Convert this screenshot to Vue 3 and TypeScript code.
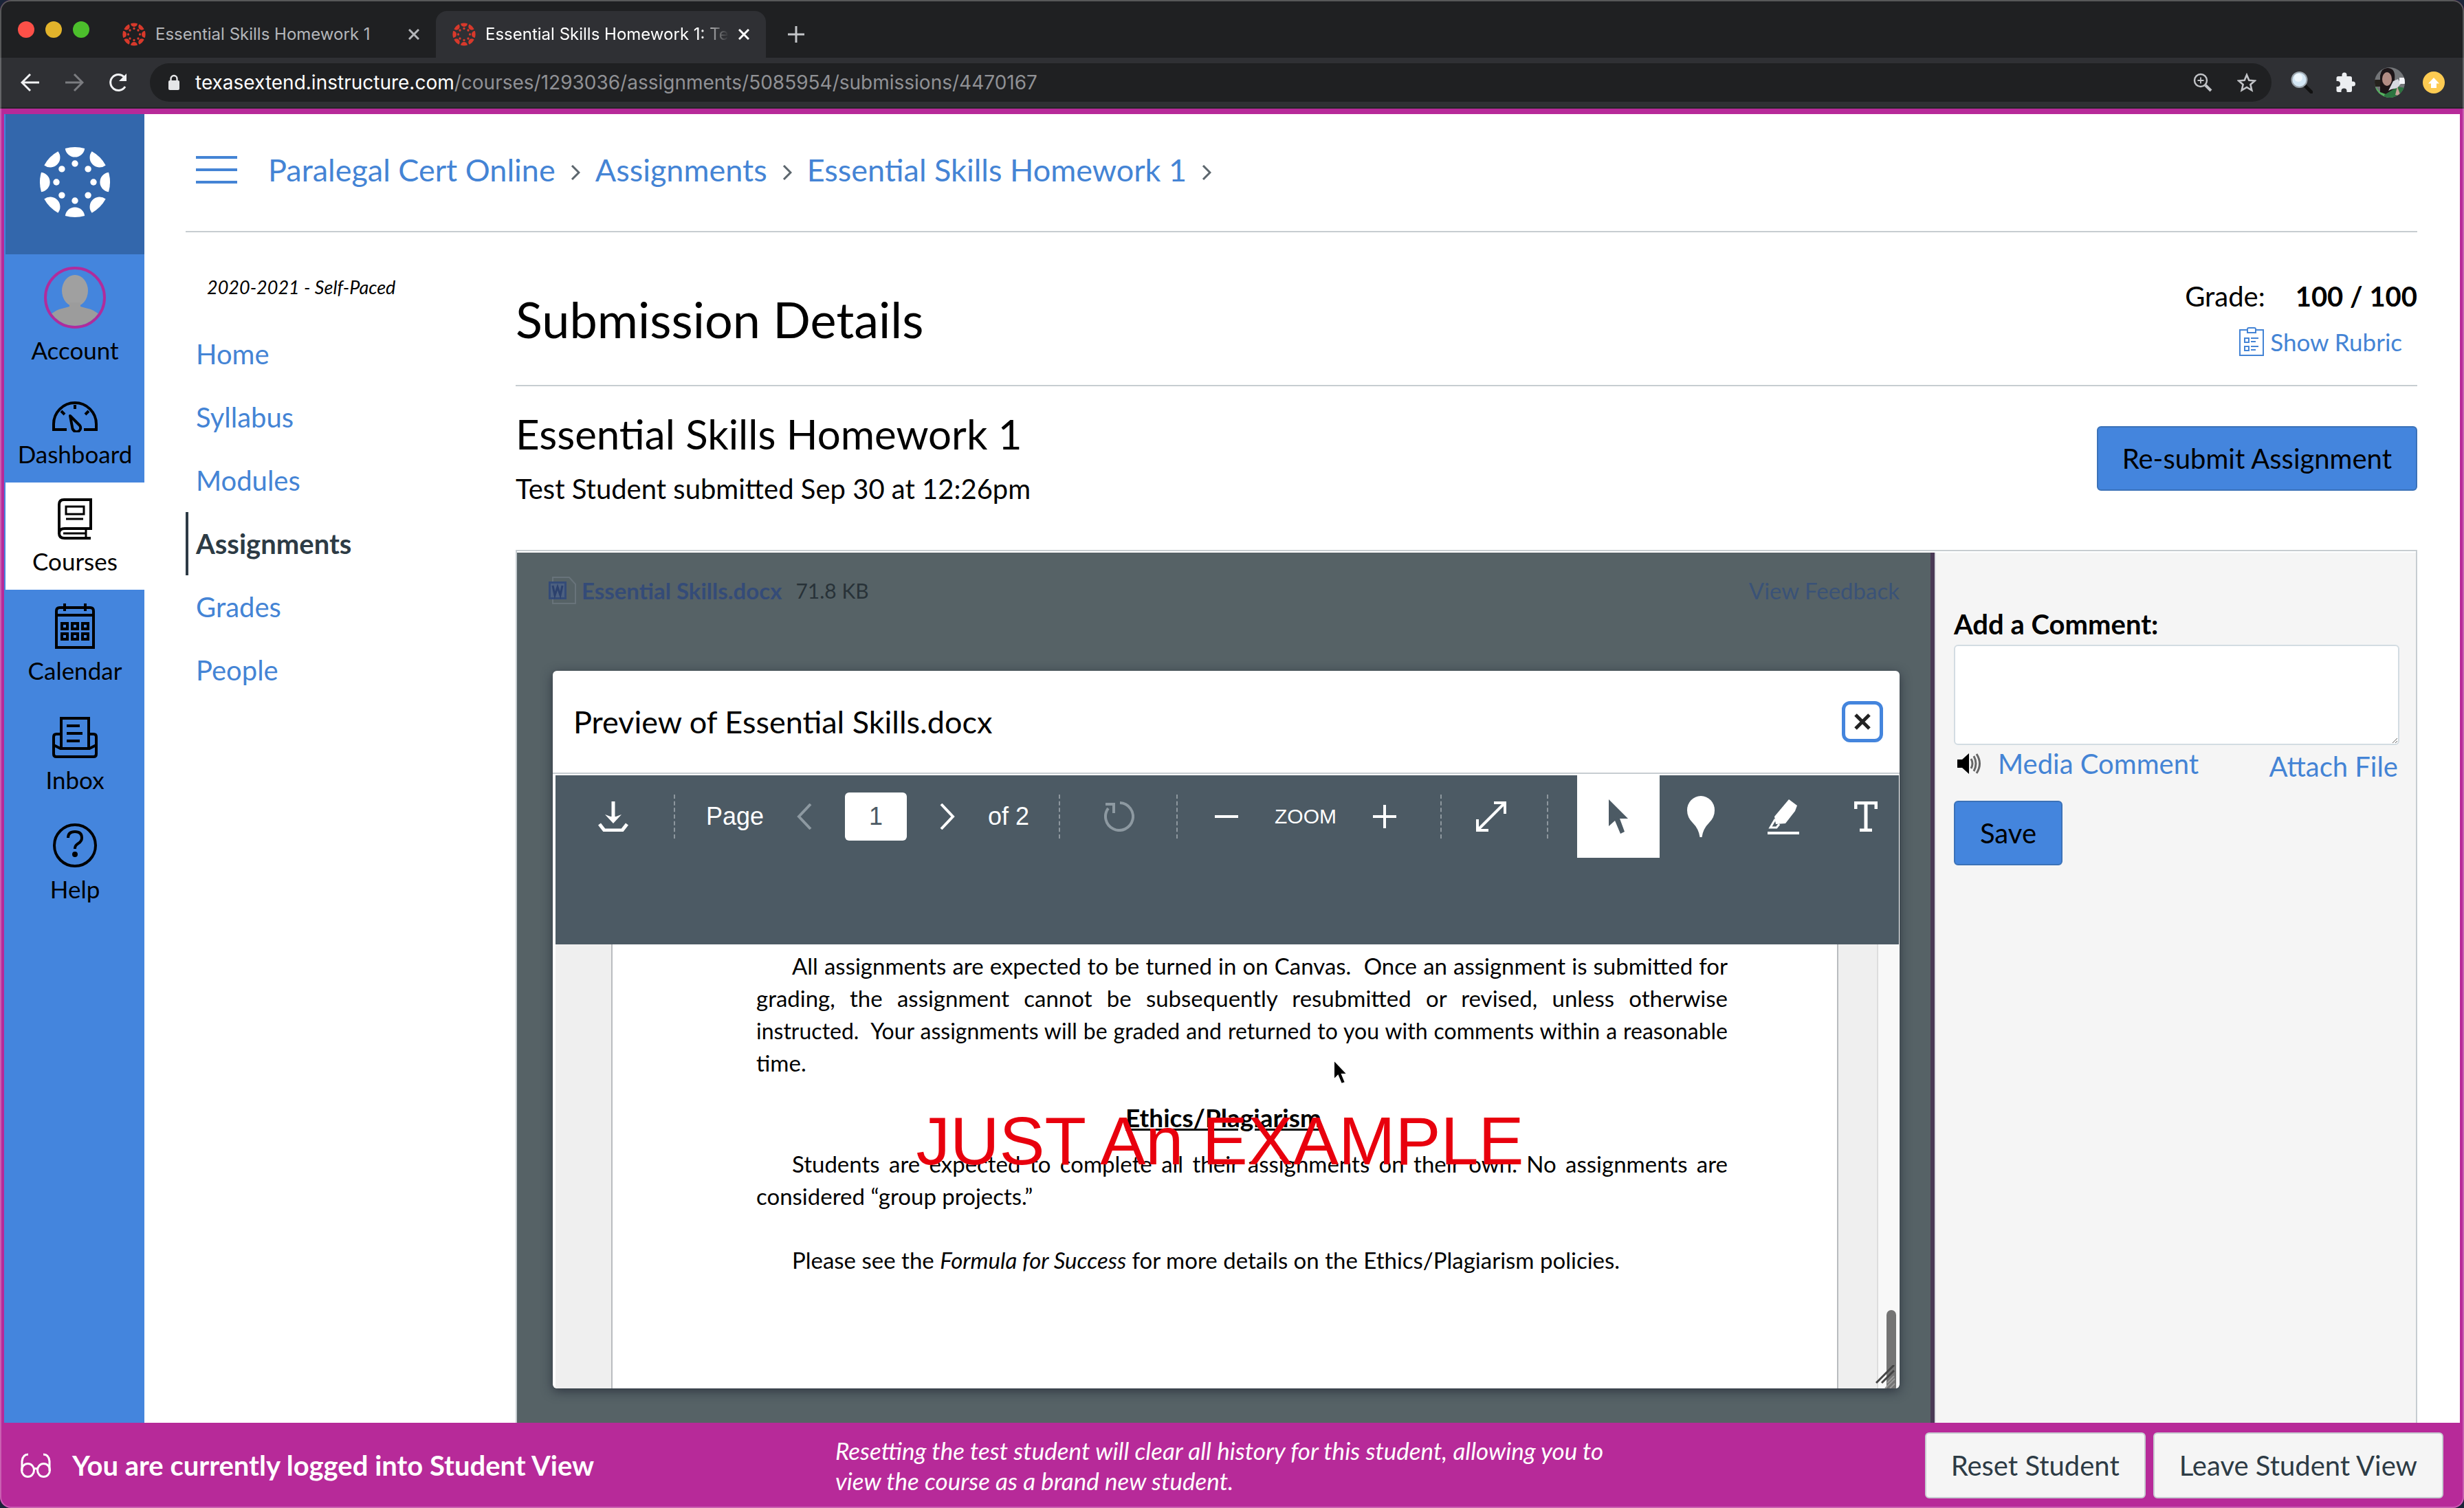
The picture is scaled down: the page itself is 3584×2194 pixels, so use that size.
<script setup lang="ts">
import { ref } from 'vue'

const spokes: number[] = [0, 45, 90, 135, 180, 225, 270, 315]

const crumbs: string[] = ['Paralegal Cert Online', 'Assignments', 'Essential Skills Homework 1']

interface CourseLink {
  label: string
  active?: boolean
}

const courseLinks: CourseLink[] = [
  { label: 'Home' },
  { label: 'Syllabus' },
  { label: 'Modules' },
  { label: 'Assignments', active: true },
  { label: 'Grades' },
  { label: 'People' },
]

const comment = ref('')
const page = ref('1')
</script>

<template>
  <div class="window">
    <header class="chrome">
      <div class="tabstrip">
        <div class="lights"><i class="red"></i><i class="yellow"></i><i class="green"></i></div>
        <div class="tab">
          <svg class="favicon" viewBox="-52 -52 104 104">
            <g v-for="a in spokes" :key="a" :transform="`rotate(${a})`">
              <path d="M-15-48.500A51 51 0 0 1 15-48.500A15 15 0 0 1-15-48.500Z" />
              <circle cy="-26" r="5" />
            </g>
          </svg>
          <span class="tab-title">Essential Skills Homework 1</span>
          <button class="tab-x" aria-label="Close tab">
            <svg viewBox="0 0 16 16"><path d="M1 1L15 15M15 1L1 15" /></svg>
          </button>
        </div>
        <div class="tab active">
          <svg class="favicon" viewBox="-52 -52 104 104">
            <g v-for="a in spokes" :key="a" :transform="`rotate(${a})`">
              <path d="M-15-48.500A51 51 0 0 1 15-48.500A15 15 0 0 1-15-48.500Z" />
              <circle cy="-26" r="5" />
            </g>
          </svg>
          <span class="tab-title">Essential Skills Homework 1: Test Student</span>
          <button class="tab-x" aria-label="Close tab">
            <svg viewBox="0 0 16 16"><path d="M1 1L15 15M15 1L1 15" /></svg>
          </button>
        </div>
        <button class="new-tab" aria-label="New tab">
          <svg viewBox="0 0 24 24"><path d="M12 0V24M0 12H24" /></svg>
        </button>
      </div>
      <div class="toolbar">
        <button class="nav-btn" aria-label="Back">
          <svg viewBox="0 0 28 28"><path d="M27 14H3M14 2L2 14L14 26" /></svg>
        </button>
        <button class="nav-btn dim" aria-label="Forward">
          <svg viewBox="0 0 28 28"><path d="M1 14H25M14 2L26 14L14 26" /></svg>
        </button>
        <button class="nav-btn" aria-label="Reload">
          <svg viewBox="0 0 28 28">
            <path d="M24 20A11.500 11.500 0 1 1 22.500 6" />
            <path d="M26 1V12H15Z" class="solid" />
          </svg>
        </button>
        <div class="address">
          <svg class="lock" viewBox="0 0 18 24">
            <path d="M4.500 10V6.500A4.500 4.500 0 0 1 13.500 6.500V10" fill="none" stroke="#e4e5e7" stroke-width="2.400" />
            <rect x="1" y="9" width="16" height="14" rx="2" fill="#e4e5e7" />
          </svg>
          <p class="url">texasextend.instructure.com<span>/courses/1293036/assignments/5085954/submissions/4470167</span></p>
          <button class="addr-btn" aria-label="Zoom">
            <svg viewBox="0 0 28 28">
              <circle cx="11" cy="11" r="9" />
              <path d="M18 18L26 26" stroke-width="4" />
              <path d="M11 6.500V15.500M6.500 11H15.500" stroke-width="1.800" />
            </svg>
          </button>
          <button class="addr-btn" aria-label="Bookmark">
            <svg viewBox="0 0 28 28">
              <path d="M14 3L17.300 10.800L25.800 11.500L19.400 17L21.300 25.300L14 20.900L6.700 25.300L8.600 17L2.200 11.500L10.700 10.800Z" stroke-width="2.600" />
            </svg>
          </button>
        </div>
        <div class="extensions">
          <svg viewBox="0 0 32 32">
            <path d="M20 20L30 30" stroke="#111" stroke-width="5" stroke-linecap="round" />
            <circle cx="12.500" cy="12" r="11" fill="#d4e7f5" stroke="#9aa3aa" stroke-width="2" />
            <circle cx="11" cy="9" r="6" fill="#eff7fc" />
          </svg>
          <svg viewBox="0 0 32 32">
            <path fill="#eceef1" d="M26.500 14.500H25V9.500A2.500 2.500 0 0 0 22.500 7H17.500V5A3.500 3.500 0 0 0 10.500 5V7H5A2.500 2.500 0 0 0 2.500 9.500V14H4A4 4 0 0 1 4 22H2.500V27.500A2.500 2.500 0 0 0 5 30H9.500V28.500A4 4 0 0 1 17.500 28.500V30H22.500A2.500 2.500 0 0 0 25 27.500V21.500H26.500A3.500 3.500 0 0 0 26.500 14.500Z" />
          </svg>
          <svg class="photo" viewBox="0 0 44 44">
            <defs><clipPath id="photo-clip"><circle cx="22" cy="22" r="22" /></clipPath></defs>
            <g clip-path="url(#photo-clip)">
              <rect width="44" height="44" fill="#737578" />
              <rect x="0" y="18" width="10" height="10" fill="#25221d" />
              <path d="M8 44V12Q10 0 20 1Q31 2 29 18L30 40Z" fill="#1d1518" />
              <ellipse cx="18" cy="17" rx="7" ry="10" fill="#b28c84" />
              <path d="M0 27L8 36L30 44H0Z" fill="#55b25f" />
              <path d="M14 40L34 28L44 30V44H14Z" fill="#2d7440" />
              <path d="M20 34L27 20L34 17L38 24L33 30L24 32Z" fill="#d7d9e0" />
              <path d="M33 28L38 42L30 40Z" fill="#c9a298" />
              <rect x="36" y="15" width="8" height="9" fill="#f6f6fa" />
            </g>
          </svg>
          <svg viewBox="0 0 32 32">
            <circle cx="16" cy="16" r="16" fill="#fdcb52" />
            <path d="M16 9L24 17.500H20V24H12V17.500H8Z" fill="#fff" />
          </svg>
        </div>
      </div>
    </header>

    <div class="page">
      <nav class="global">
        <a href="#" class="logo" aria-label="Canvas">
          <svg viewBox="-52 -52 104 104">
            <g v-for="a in spokes" :key="a" :transform="`rotate(${a})`">
              <path d="M-14.200-49A51 51 0 0 1 14.200-49A14.300 14.300 0 0 1-14.200-49Z" />
              <circle cy="-27" r="4.700" />
            </g>
          </svg>
        </a>
        <a href="#" class="gitem account">
          <span class="avatar">
            <svg viewBox="0 0 82 82">
              <ellipse cx="41" cy="31" rx="19" ry="23" fill="#a0a0a0" />
              <path d="M33 48H49V54Q56 56 64 58Q74 62 80 70V82H2V70Q8 62 18 58Q26 56 33 54Z" fill="#9c9c9c" />
            </svg>
          </span>
          <span>Account</span>
        </a>
        <a href="#" class="gitem dashboard">
          <svg width="66" height="46" viewBox="0 0 66 46">
            <path d="M21 42H2V34A31 31 0 0 1 64 34V42H46" />
            <path d="M33 6V12M13 15L18 20M53 15L48 20" stroke-width="4" />
            <path d="M26 22L40 36A5 5 0 0 1 31 43Q29 41 29 38Z" stroke-linejoin="round" />
          </svg>
          <span>Dashboard</span>
        </a>
        <a href="#" class="gitem current">
          <svg width="50" height="60" viewBox="0 0 50 60">
            <path d="M2 52V9Q2 2 9 2H48V44H10Q2 44 2 51Q2 58 10 58H48" />
            <path d="M12 12H38V23H12ZM12 30H37M8 51H40M41 44V57" stroke-width="3" />
          </svg>
          <span>Courses</span>
        </a>
        <a href="#" class="gitem">
          <svg width="58" height="66" viewBox="0 0 58 66">
            <path d="M2 64V11Q2 6 7 6H51Q56 6 56 11V64ZM2 17H56" />
            <path d="M14 0V11M44 0V11" stroke-width="4" />
            <path d="M10 29H18V37H10ZM25 29H33V37H25ZM40 29H48V37H40ZM10 44H18V52H10ZM25 44H33V52H25ZM40 44H48V52H40Z" />
          </svg>
          <span>Calendar</span>
        </a>
        <a href="#" class="gitem">
          <svg width="66" height="60" viewBox="0 0 66 60">
            <path d="M13 46V2H53V46ZM13 25H6Q2 25 2 29V54Q2 58 6 58H60Q64 58 64 54V29Q64 25 60 25H53M2 41L12 46H54L64 41" />
            <path d="M21 13H40M21 24H44M21 35H40" />
          </svg>
          <span>Inbox</span>
        </a>
        <a href="#" class="gitem">
          <svg width="64" height="64" viewBox="0 0 64 64">
            <circle cx="32" cy="32" r="30" />
            <path d="M22 21Q22 12 32 12Q42 12 42 21Q42 26 37 29Q32 32 32 36V37" />
            <circle cx="32" cy="45" r="2" />
          </svg>
          <span>Help</span>
        </a>
      </nav>

      <main class="main">
        <div class="crumbbar">
          <button class="burger" aria-label="Course menu"><i></i><i></i><i></i></button>
          <template v-for="c in crumbs" :key="c">
            <a href="#">{{ c }}</a>
            <svg class="chev" viewBox="0 0 14 22"><path d="M2 1L12 11L2 21" /></svg>
          </template>
        </div>

        <div class="columns">
          <nav class="course-nav">
            <p class="term">2020-2021 - Self-Paced</p>
            <a v-for="l in courseLinks" :key="l.label" href="#" :class="{ active: l.active }">{{ l.label }}</a>
          </nav>

          <section class="content">
            <div class="title-row">
              <h1>Submission Details</h1>
              <div class="grade">
                <p>Grade:<strong>100 / 100</strong></p>
                <a href="#">
                  <svg width="36" height="42" viewBox="0 0 36 42">
                    <path d="M12 4H1V41H35V4H24M12 8V3Q12 1 14 1H22Q24 1 24 3V8Z" />
                    <path d="M8 16H14V22H8ZM8 28H14V34H8ZM17 16H28M17 21H24M17 28H28M17 33H24" />
                  </svg>
                  Show Rubric
                </a>
              </div>
            </div>
            <div class="sub-row">
              <div>
                <h2>Essential Skills Homework 1</h2>
                <p>Test Student submitted Sep 30 at 12:26pm</p>
              </div>
              <button class="primary">Re-submit Assignment</button>
            </div>

            <div class="workarea">
              <div class="preview">
                <div class="file-row">
                  <svg width="40" height="40" viewBox="0 0 40 40">
                    <path d="M6 1H30L39 11V39H6Z" fill="none" stroke="#68737a" stroke-width="2" />
                    <rect x="0" y="7" width="26" height="26" fill="#344b78" />
                    <rect x="3" y="10" width="20" height="20" fill="#4c6080" />
                    <path d="M6 13L9 27L13 15L17 27L20 13" fill="none" stroke="#2c416d" stroke-width="3" />
                  </svg>
                  <a href="#" class="file">Essential Skills.docx</a>
                  <span class="size">71.8 KB</span>
                  <a href="#" class="feedback">View Feedback</a>
                </div>

                <div class="dialog" role="dialog" aria-label="Document preview">
                  <div class="dialog-head">
                    <h3>Preview of Essential Skills.docx</h3>
                    <button class="close" aria-label="Close">
                      <svg viewBox="0 0 24 24"><path d="M2 2L22 22M22 2L2 22" /></svg>
                    </button>
                  </div>
                  <div class="viewer">
                    <div class="tools">
                      <div class="group download">
                        <button aria-label="Download">
                          <svg width="44" height="44" viewBox="0 0 44 44">
                            <path d="M22 0V26" stroke-width="5" />
                            <path d="M10 19L18 22H26L34 19L22 32Z" class="solid" />
                            <path d="M2 33L9 42H35L42 33" stroke-width="5" />
                          </svg>
                        </button>
                      </div>
                      <div class="group paging">
                        <label for="page-no">Page</label>
                        <button class="faint" aria-label="Previous page">
                          <svg width="24" height="38" viewBox="0 0 24 38"><path d="M21 1L4 19L21 37" /></svg>
                        </button>
                        <input id="page-no" v-model="page" type="text" />
                        <button aria-label="Next page">
                          <svg width="24" height="38" viewBox="0 0 24 38"><path d="M3 1L20 19L3 37" /></svg>
                        </button>
                        <span>of 2</span>
                      </div>
                      <div class="group single">
                        <button class="faint" aria-label="Rotate">
                          <svg width="44" height="44" viewBox="0 0 44 44">
                            <path d="M23 2A20 20 0 1 1 6 10" />
                            <path d="M2 4H14V17" />
                          </svg>
                        </button>
                      </div>
                      <div class="group zoom">
                        <button aria-label="Zoom out">
                          <svg width="34" height="34" viewBox="0 0 34 34"><path d="M0 17H34" /></svg>
                        </button>
                        <span class="zoom-label">ZOOM</span>
                        <button aria-label="Zoom in">
                          <svg width="34" height="34" viewBox="0 0 34 34"><path d="M0 17H34M17 0V34" /></svg>
                        </button>
                      </div>
                      <div class="group expand">
                        <button aria-label="Full screen">
                          <svg width="44" height="44" viewBox="0 0 44 44">
                            <path d="M4 40L40 4M26 2H42V18M2 26V42H18" />
                          </svg>
                        </button>
                      </div>
                      <div class="annotate">
                        <button class="on" aria-label="Select">
                          <svg width="32" height="50" viewBox="0 0 32 50">
                            <path d="M2 0L30 28H18L25 47L19 50L11 31L2 39Z" class="dark" />
                          </svg>
                        </button>
                        <button aria-label="Pin">
                          <svg width="42" height="60" viewBox="0 0 42 60">
                            <path d="M21 0A20.500 20.500 0 0 1 41 21Q41 31 33 39Q24 48 22.500 60H19.500Q18 48 9 39Q1 31 1 21A20.500 20.500 0 0 1 21 0Z" class="solid" />
                          </svg>
                        </button>
                        <button aria-label="Highlight">
                          <svg width="46" height="52" viewBox="0 0 46 52">
                            <path d="M31 1L43 10L40 18L26 36L12 37L10 26Z" class="solid" />
                            <path d="M11 30L4 42H13L17 37" stroke-width="3" />
                            <path d="M0 50H46" stroke-width="4" />
                          </svg>
                        </button>
                        <button aria-label="Text">
                          <svg width="34" height="44" viewBox="0 0 34 44">
                            <path d="M2 11V2H32V11M17 2V41M8 42H26" stroke-width="5" />
                          </svg>
                        </button>
                      </div>
                    </div>
                    <div class="doc">
                      <div class="gutter"></div>
                      <article class="sheet">
                        <p class="indent">All assignments are expected to be turned in on Canvas.&nbsp; Once an assignment is submitted for</p>
                        <p>grading, the assignment cannot be subsequently resubmitted or revised, unless otherwise</p>
                        <p class="tight">instructed.&nbsp; Your assignments will be graded and returned to you with comments within a reasonable</p>
                        <p class="last">time.</p>
                        <h4>Ethics/Plagiarism</h4>
                        <p class="indent">Students are expected to complete all their assignments on their own. No assignments are</p>
                        <p class="last">considered “group projects.”</p>
                        <p class="indent last spaced">Please see the <em>Formula for Success</em> for more details on the Ethics/Plagiarism policies.</p>
                        <div class="stamp">JUST An EXAMPLE</div>
                        <svg class="pointer" width="24" height="40" viewBox="0 0 24 40">
                          <path d="M2 2V31L8 25L13 37L19 35L14 23H22Z" fill="#000" stroke="#fff" stroke-width="2" />
                        </svg>
                      </article>
                      <div class="gutter right"></div>
                      <div class="track">
                        <div class="thumb"></div>
                        <svg class="grip" width="32" height="34" viewBox="0 0 32 34">
                          <path d="M1 26L27 0M9 26L27 8" stroke="#444" stroke-width="3" />
                          <path d="M17 26L27 16M14 34L28 20M21 34L28 27" stroke="#999" stroke-width="2" />
                        </svg>
                      </div>
                    </div>
                  </div>
                </div>
              </div>

              <form class="comments" @submit.prevent>
                <label for="comment">Add a Comment:</label>
                <textarea id="comment" v-model="comment"></textarea>
                <div class="comment-links">
                  <a href="#">
                    <svg width="40" height="32" viewBox="0 0 40 32">
                      <path d="M1 10H8L18 1V31L8 22H1Z" fill="#000" />
                      <path d="M21 9Q25 16 21 23M25 5Q31 16 25 27M29 2Q38 16 29 30" fill="none" stroke="#666" stroke-width="3" />
                    </svg>
                    Media Comment
                  </a>
                  <a href="#" class="attach">Attach File</a>
                </div>
                <button class="primary save">Save</button>
              </form>
            </div>
          </section>
        </div>
      </main>
    </div>

    <footer class="student-bar">
      <svg class="glasses" viewBox="0 0 44 36">
        <path d="M2 26V12Q3 2 11 2M42 26V12Q41 2 33 2M19 24Q22 21 25 24" />
        <ellipse cx="10.500" cy="25" rx="9" ry="9.500" />
        <ellipse cx="33.500" cy="25" rx="9" ry="9.500" />
      </svg>
      <strong>You are currently logged into Student View</strong>
      <p>Resetting the test student will clear all history for this student, allowing you to view the course as a brand new student.</p>
      <button>Reset Student</button>
      <button>Leave Student View</button>
    </footer>
  </div>
</template>

<style>
body {
  margin: 0;
  background: #1a2438;
}
</style>

<style scoped>
* {
  box-sizing: border-box;
}
p, h1, h2, h3, h4 {
  margin: 0;
  font-weight: 400;
}
a {
  color: #4484d5;
  text-decoration: none;
}
button {
  font: inherit;
  color: inherit;
  background: none;
  border: 0;
  padding: 0;
}
svg {
  display: block;
  flex: none;
}
.window {
  position: relative;
  display: flex;
  flex-direction: column;
  min-height: 100vh;
  border-radius: 16px;
  overflow: hidden;
  background: #b72a99;
  color: #000;
  font-family: Lato, "Liberation Sans", sans-serif;
  font-size: 40px;
  line-height: 48px;
}
.window::after {
  content: "";
  position: absolute;
  inset: 0;
  border: 2px solid rgba(255, 255, 255, 0.25);
  border-radius: 16px;
  pointer-events: none;
}

/* Browser frame */
.chrome {
  font-family: Inter, Roboto, sans-serif;
  background: #1f2022;
}
.tabstrip {
  display: flex;
  height: 84px;
  padding: 16px 0 0 26px;
}
.lights {
  display: flex;
  gap: 16px;
  width: 128px;
  padding-top: 15px;
}
.lights i {
  width: 24px;
  height: 24px;
  border-radius: 50%;
}
.red { background: #fd5048; }
.yellow { background: #e2b32b; }
.green { background: #4cbf2c; }
.tab {
  display: flex;
  align-items: center;
  width: 480px;
  height: 68px;
  padding: 0 24px;
  border-radius: 16px 16px 0 0;
  color: #b4b6ba;
  font-size: 24px;
}
.tab.active {
  background: #2f3034;
  color: #fff;
}
.favicon {
  width: 34px;
  height: 34px;
  margin-right: 14px;
  fill: #d8392b;
}
.tab-title {
  flex: 1;
  min-width: 0;
  overflow: hidden;
  white-space: nowrap;
  margin-right: 14px;
}
.active .tab-title {
  mask-image: linear-gradient(to right, #000 88%, transparent);
}
.tab-x svg {
  width: 16px;
  height: 16px;
  stroke: currentColor;
  stroke-width: 3;
}
.new-tab {
  margin-left: 32px;
  color: #c4c6c9;
}
.new-tab svg {
  width: 24px;
  height: 24px;
  stroke: currentColor;
  stroke-width: 3;
}
.toolbar {
  display: flex;
  align-items: center;
  height: 74px;
  padding: 0 28px 0 30px;
  background: #2f3034;
  border-bottom: 2px solid #242528;
}
.nav-btn {
  width: 28px;
  margin-right: 36px;
  color: #f1f2f4;
}
.nav-btn.dim {
  color: #7b7c80;
}
.nav-btn svg {
  width: 28px;
  height: 28px;
  fill: none;
  stroke: currentColor;
  stroke-width: 3;
}
.nav-btn .solid {
  fill: currentColor;
  stroke: none;
}
.address {
  flex: 1;
  display: flex;
  align-items: center;
  height: 56px;
  margin: 0 28px 0 -4px;
  padding: 0 22px 0 26px;
  border-radius: 28px;
  background: #1f2022;
}
.lock {
  width: 18px;
  height: 24px;
  margin-right: 22px;
}
.url {
  flex: 1;
  color: #fff;
  font-size: 28px;
}
.url span {
  color: #909195;
}
.addr-btn {
  margin-left: 36px;
  color: #c2c4c8;
}
.addr-btn svg {
  width: 28px;
  height: 28px;
  fill: none;
  stroke: currentColor;
  stroke-width: 2.400;
}
.extensions {
  display: flex;
  align-items: center;
  gap: 32px;
}
.extensions svg {
  width: 32px;
  height: 32px;
}
.extensions .photo {
  width: 44px;
  height: 44px;
  margin: 0 -6px;
}

/* Page frame */
.page {
  flex: 1;
  display: flex;
  border: solid #b72a99;
  border-width: 8px 6px 0;
  background: #fff;
}
.global {
  flex: none;
  width: 204px;
  padding-left: 2px;
  background: #4485dd;
}
.logo {
  display: flex;
  align-items: center;
  justify-content: center;
  height: 204px;
  padding-bottom: 6px;
  background: #3367ac;
}
.logo svg {
  width: 104px;
  height: 104px;
  fill: #fff;
}
.gitem {
  display: flex;
  flex-direction: column;
  align-items: center;
  justify-content: flex-end;
  gap: 11px;
  height: 159px;
  padding-bottom: 22px;
  color: #000;
  font-size: 35px;
  line-height: 40px;
}
.gitem svg {
  fill: none;
  stroke: #000;
  stroke-width: 4;
}
.gitem.account {
  height: 181px;
}
.gitem.dashboard {
  height: 151px;
}
.gitem.current {
  height: 156px;
  background: #fff;
}
.avatar {
  width: 90px;
  height: 90px;
  border: 4px solid #b02c9c;
  border-radius: 50%;
  overflow: hidden;
}
.avatar svg {
  width: 82px;
  height: 82px;
  stroke: none;
}
.main {
  flex: 1;
  min-width: 0;
  display: flex;
  flex-direction: column;
  padding: 0 62px 0 60px;
}
.crumbbar {
  display: flex;
  align-items: center;
  height: 172px;
  padding: 0 0 8px 15px;
  border-bottom: 2px solid #c7cdd1;
  font-size: 45px;
}
.burger {
  display: flex;
  flex-direction: column;
  gap: 14px;
  width: 60px;
  margin-right: 45px;
}
.burger i {
  height: 4px;
  background: #4484d5;
}
.chev {
  width: 14px;
  height: 22px;
  margin: 8px 22px 0;
  fill: none;
  stroke: #5c666d;
  stroke-width: 3;
}
.columns {
  flex: 1;
  display: flex;
}
.course-nav {
  width: 480px;
  flex: none;
  padding-top: 60px;
}
.term {
  padding-left: 31px;
  margin-bottom: 31px;
  font-size: 27px;
  line-height: 40px;
  font-style: italic;
}
.course-nav a {
  display: block;
  padding-left: 11px;
  border-left: 4px solid transparent;
  line-height: 92px;
}
.course-nav a.active {
  border-color: #2d3b45;
  color: #2d3b45;
  font-weight: 700;
}
.content {
  flex: 1;
  min-width: 0;
  display: flex;
  flex-direction: column;
}
.title-row {
  display: flex;
  justify-content: space-between;
  height: 224px;
  border-bottom: 2px solid #c7cdd1;
}
h1 {
  padding-top: 82px;
  font-size: 72px;
  line-height: 88px;
}
.grade {
  padding-top: 69px;
}
.grade strong {
  margin-left: 44px;
}
.grade a {
  display: flex;
  align-items: center;
  justify-content: flex-end;
  gap: 9px;
  margin-top: 20px;
  padding-right: 22px;
  font-size: 35px;
  line-height: 44px;
}
.grade svg {
  fill: none;
  stroke: #4484d5;
  stroke-width: 2;
}
.sub-row {
  display: flex;
  justify-content: space-between;
  align-items: flex-start;
  height: 238px;
}
h2 {
  margin: 33px 0 20px;
  font-size: 60px;
  line-height: 72px;
}
.primary {
  min-width: 158px;
  height: 94px;
  padding: 0 35px;
  border: 2px solid #3b72b8;
  border-radius: 6px;
  background: #4485dd;
}
.sub-row .primary {
  margin-top: 58px;
}
.workarea {
  flex: 1;
  display: flex;
  padding-top: 2px;
  border: solid #c7cdd1;
  border-width: 2px 2px 0;
}
.preview {
  flex: 1;
  min-width: 0;
  display: flex;
  flex-direction: column;
  padding: 33px 45px 50px 52px;
  border-right: 6px solid #4a3a56;
  background: #566266;
}
.file-row {
  display: flex;
  align-items: center;
  margin: 0 0 95px -6px;
  font-size: 33px;
  line-height: 44px;
}
.file {
  margin: 0 20px 0 8px;
  color: #344b78;
  font-weight: 700;
}
.size {
  color: #283238;
  font-size: 30px;
}
.feedback {
  margin-left: auto;
  color: #3a5277;
}
.dialog {
  flex: 1;
  display: flex;
  flex-direction: column;
  border-radius: 6px;
  overflow: hidden;
  background: #fff;
  box-shadow: 0 4px 16px rgba(30, 35, 50, 0.7);
}
.dialog-head {
  display: flex;
  align-items: center;
  justify-content: space-between;
  height: 150px;
  padding: 0 24px 0 30px;
  border-bottom: 2px solid #c7cdd1;
}
h3 {
  font-size: 45px;
}
.close {
  display: flex;
  align-items: center;
  justify-content: center;
  width: 60px;
  height: 60px;
  border: 5px solid #4485dd;
  border-radius: 12px;
}
.close svg {
  width: 24px;
  height: 24px;
  stroke: #222;
  stroke-width: 5;
}
.viewer {
  flex: 1;
  display: flex;
  flex-direction: column;
  padding: 2px 1px 0 4px;
}
.tools {
  display: flex;
  height: 246px;
  background: #4c5a64;
  color: #fff;
  font-family: "Liberation Sans", Arial, sans-serif;
  font-size: 36px;
  overflow: hidden;
}
.group {
  position: relative;
  flex: none;
  display: flex;
  align-items: center;
  justify-content: center;
  height: 120px;
}
.group::after {
  content: "";
  position: absolute;
  right: 0;
  top: 28px;
  height: 64px;
  border-right: 2px dashed #8d979e;
}
.tools svg {
  fill: none;
  stroke: currentColor;
  stroke-width: 4;
}
.tools .solid {
  fill: currentColor;
  stroke: none;
}
.tools .dark {
  fill: #4c5a64;
  stroke: none;
}
.faint {
  color: #8d99a1;
}
.download {
  width: 174px;
  padding-right: 6px;
}
.paging {
  width: 560px;
  gap: 47px;
}
.single {
  width: 171px;
}
.zoom {
  width: 384px;
  gap: 53px;
  padding-right: 12px;
}
.expand {
  width: 155px;
  padding-right: 12px;
}
.zoom-label {
  font-size: 30px;
}
.paging input {
  width: 90px;
  height: 70px;
  padding: 0;
  border: 0;
  border-radius: 6px;
  background: #fff;
  color: #4c5a64;
  font: inherit;
  text-align: center;
}
.annotate {
  display: flex;
  flex: none;
  margin-left: 42px;
}
.annotate button {
  display: flex;
  align-items: center;
  justify-content: center;
  width: 120px;
  height: 120px;
}
.annotate .on {
  background: #fff;
}
.doc {
  flex: 1;
  display: flex;
  min-height: 646px;
}
.gutter {
  flex: none;
  width: 81px;
  background: #efefef;
}
.gutter.right {
  width: 56px;
}
.sheet {
  position: relative;
  flex: 1;
  min-width: 0;
  padding: 8px 159px 0 209px;
  border: solid #b9bcbf;
  border-width: 0 2px;
  background: #fff;
  font-size: 33px;
  line-height: 47px;
}
.sheet p {
  text-align: justify;
  text-align-last: justify;
  white-space: nowrap;
}
.sheet p.tight {
  font-size: 32px;
}
.sheet p.last {
  text-align-last: left;
}
.sheet .indent {
  padding-left: 52px;
}
.sheet .spaced {
  margin-top: 46px;
}
h4 {
  margin: 32px 0 21px;
  padding-right: 54px;
  font-size: 37px;
  font-weight: 700;
  text-align: center;
  text-decoration: underline;
}
.stamp {
  position: absolute;
  left: 0;
  right: 14px;
  top: 228px;
  color: #e8000d;
  font-family: "Liberation Sans", Arial, sans-serif;
  font-size: 99px;
  line-height: 116px;
  text-align: center;
}
.pointer {
  position: absolute;
  left: 1047px;
  top: 166px;
}
.track {
  position: relative;
  flex: none;
  display: flex;
  align-items: flex-end;
  width: 32px;
  padding-left: 12px;
  border-left: 2px solid #dddddd;
  background: #f8f8f8;
}
.thumb {
  width: 14px;
  height: 114px;
  border-radius: 7px 7px 0 0;
  background: #747474;
}
.grip {
  position: absolute;
  right: 2px;
  bottom: 0;
}
.comments {
  flex: none;
  display: flex;
  flex-direction: column;
  width: 700px;
  padding: 80px 24px 0 26px;
  border-left: 2px solid #dcdfe2;
  background: #f5f5f5;
}
.comments label {
  font-weight: 700;
}
textarea {
  height: 146px;
  margin-top: 6px;
  padding: 12px;
  border: 2px solid #d3dce2;
  border-radius: 6px;
  background: #fff;
  font: inherit;
  resize: vertical;
}
.comment-links {
  display: flex;
  justify-content: space-between;
  align-items: flex-start;
  height: 52px;
  margin: 3px 2px 26px 4px;
}
.comment-links a {
  display: flex;
  align-items: center;
  gap: 20px;
}
.comment-links .attach {
  align-self: flex-end;
}
.save {
  align-self: flex-start;
}

/* Student view bar */
.student-bar {
  display: flex;
  align-items: center;
  height: 124px;
  padding: 0 30px;
  background: #b72a99;
  color: #fff;
}
.glasses {
  width: 44px;
  height: 36px;
  margin-right: 31px;
  fill: none;
  stroke: #fff;
  stroke-width: 3;
}
.student-bar strong {
  width: 1110px;
}
.student-bar p {
  width: 1160px;
  margin-right: auto;
  font-size: 35px;
  line-height: 44px;
  font-style: italic;
}
.student-bar button {
  height: 96px;
  margin-left: 11px;
  padding: 0 36px;
  border: 2px solid #c7cdd1;
  border-radius: 6px;
  background: #f5f5f5;
  color: #2d3b45;
}
</style>
